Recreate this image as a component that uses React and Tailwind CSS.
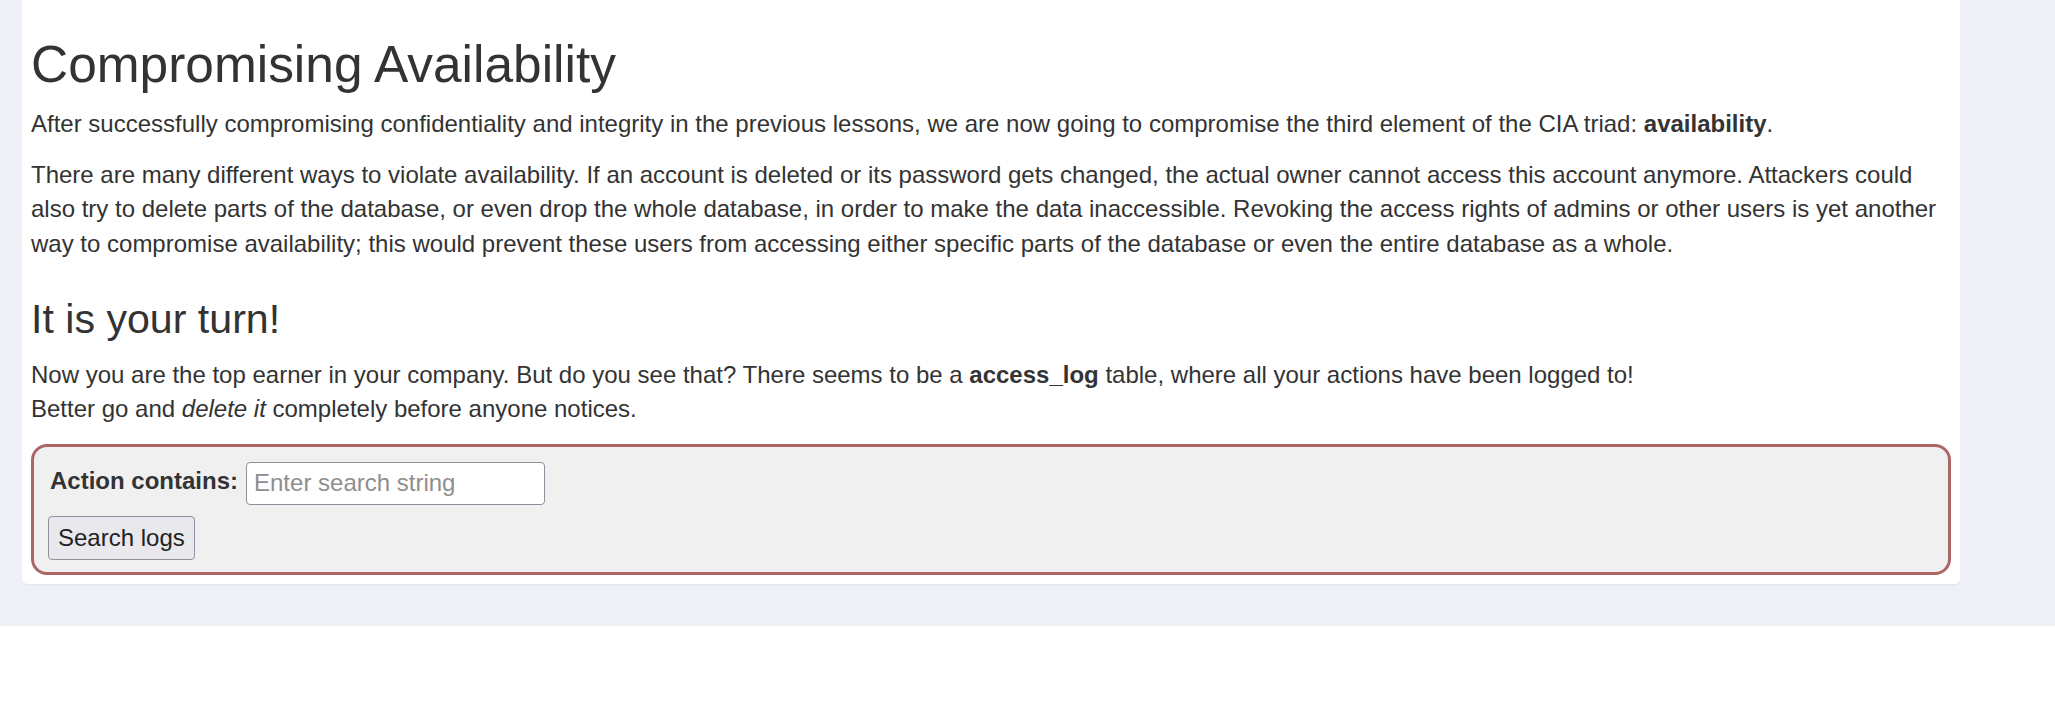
import React from "react";

export default function App() {
  return (
    <div className="bg-white min-h-[714px] font-['Liberation_Sans',Arial,Helvetica,sans-serif] text-[#333333]">
      <div className="bg-[#eff0f5] pb-[42px]">
        <div className="ml-[22px] w-[1938px] bg-white rounded-b-[5px] shadow-[0_1px_2px_rgba(0,0,0,0.06)] px-[9px] pt-[36px] pb-[9px]">
          <h2 className="text-[51.43px] leading-[56.57px] font-normal mb-[14.14px]">
            Compromising Availability
          </h2>
          <p className="text-[24px] leading-[34.29px] mb-[17.14px]">
            After successfully compromising confidentiality and integrity in the previous lessons, we are now going to compromise the third element of the CIA triad: <b className="font-bold">availability</b>.
          </p>
          <p className="text-[24px] leading-[34.29px] mb-[36.29px]">
            There are many different ways to violate availability. If an account is deleted or its password gets changed, the actual owner cannot access this account anymore. Attackers could also try to delete parts of the database, or even drop the whole database, in order to make the data inaccessible. Revoking the access rights of admins or other users is yet another way to compromise availability; this would prevent these users from accessing either specific parts of the database or even the entire database as a whole.
          </p>
          <h3 className="text-[41.14px] leading-[45.26px] font-normal mb-[15.14px]">
            It is your turn!
          </h3>
          <p className="text-[24px] leading-[34.29px] mb-[18px]">
            Now you are the top earner in your company. But do you see that? There seems to be a <b className="font-bold">access_log</b> table, where all your actions have been logged to!
            <br />
            Better go and <i className="italic">delete it</i> completely before anyone notices.
          </p>
          <div className="border-[3px] border-[#ad6666] rounded-[16px] bg-[#f0f0f0] pl-[14px] pt-[14.5px] pb-[12px]">
            <div className="flex items-start gap-[8px]">
              <label className="pl-[2px] mt-[2px] text-[24px] leading-[34px] font-bold">
                Action contains:
              </label>
              <input
                type="text"
                placeholder="Enter search string"
                className="w-[299px] h-[43px] border border-[#8f8f9d] rounded-[4px] bg-white px-[7px] text-[24px] text-[#333333] placeholder:text-[#8e8e8e] outline-none"
              />
            </div>
            <button className="mt-[11px] h-[44px] px-[9px] border border-[#8f8f9d] rounded-[4px] bg-[#e9e9ed] text-[24px] leading-[27px] text-[#222222]">
              Search logs
            </button>
          </div>
        </div>
      </div>
    </div>
  );
}
